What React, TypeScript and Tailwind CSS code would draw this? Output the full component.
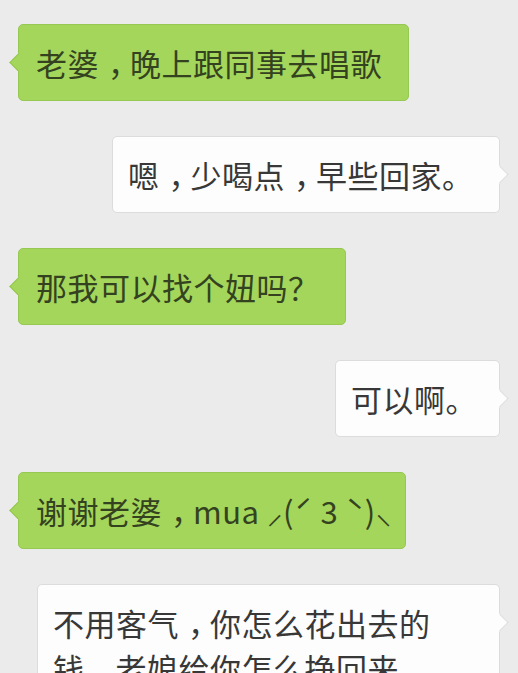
import React from "react";

type Msg = { side: "left" | "right"; text: string; width: string; pr?: string };

const messages: Msg[] = [
  { side: "left", text: "老婆，晚上跟同事去唱歌", width: "w-[391px]" },
  { side: "right", text: "嗯，少喝点，早些回家。", width: "w-[388px]" },
  { side: "left", text: "那我可以找个妞吗？", width: "w-[328px]" },
  { side: "right", text: "可以啊。", width: "w-[165px]" },
  { side: "left", text: "谢谢老婆，mua ⸝(ˊ 3 ˋ)⸜", width: "w-[388px]" },
  { side: "right", text: "不用客气，你怎么花出去的钱，老娘给你怎么挣回来。", width: "w-[463px]", pr: "pr-[48px]" },
];

// commas sit in the middle of their cell in the screenshot
function Text({ text }: { text: string }) {
  const parts = text.split("，");
  return (
    <>
      {parts.map((p, i) => (
        <React.Fragment key={i}>
          {p}
          {i < parts.length - 1 && (
            <span className="inline-block w-[31px] pl-[9px] tracking-[-9px]">，</span>
          )}
        </React.Fragment>
      ))}
    </>
  );
}

function Bubble({ msg }: { msg: Msg }) {
  const isLeft = msg.side === "left";
  return (
    <div className={`flex ${isLeft ? "justify-start pl-[18px]" : "justify-end pr-[18px]"}`}>
      <div
        className={`relative ${msg.width} ${msg.pr ?? "pr-1"} shrink-0 rounded-[5px] border py-[15px] text-[31px] leading-[45px] ${
          isLeft
            ? "bg-[#a3d65b] border-[#97c853] text-[#34421f] pl-[17px]"
            : "bg-[#fdfdfd] border-[#dcdcdc] text-[#383838] pl-[15px]"
        }`}
      >
        {/* tail */}
        <span
          className={`absolute top-[31px] h-[13px] w-[13px] rotate-45 border ${
            isLeft
              ? "-left-[7px] bg-[#a3d65b] border-[#97c853] border-t-transparent border-r-transparent"
              : "-right-[7px] bg-[#fdfdfd] border-[#dcdcdc] border-b-transparent border-l-transparent"
          }`}
        ></span>
        <span className="relative tracking-[0.5px]">
          <Text text={msg.text} />
        </span>
      </div>
    </div>
  );
}

export default function App() {
  return (
    <div
      className="h-[673px] w-[518px] overflow-hidden bg-[#ebebeb] pt-[24px]"
      style={{ fontFamily: '"Noto Sans CJK SC", "Noto Sans", sans-serif' }}
    >
      <div className="flex flex-col gap-[35px]">
        {messages.map((m, i) => (
          <Bubble key={i} msg={m} />
        ))}
      </div>
    </div>
  );
}
